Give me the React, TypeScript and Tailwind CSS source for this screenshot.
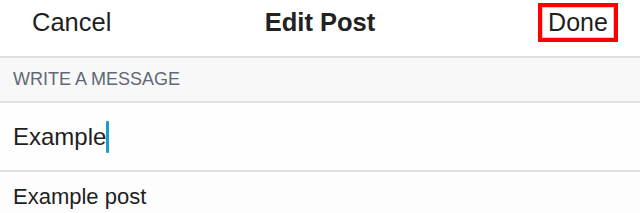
export default function App() {
  return (
    <div className="w-[640px] h-[213px] overflow-hidden bg-[#fdfdfd] text-[#1f1f1f]" style={{ fontFamily: '"Liberation Sans", Arial, sans-serif' }}>
      <div className="h-[58px] bg-white border-b-2 border-[#dedede] grid grid-cols-[1fr_auto_1fr] items-start pt-[3px]">
        <div className="pl-[32px] h-[39px] leading-[39px] text-[25.5px]">Cancel</div>
        <div className="h-[39px] leading-[39px] text-[25.5px] font-bold text-[#222]">Edit Post</div>
        <div className="flex justify-end pr-[22px]">
          <div className="border-4 border-[#ff0000] h-[39px] w-[80px]">
            <div className="h-full border border-[#f6c4c4] leading-[29px] text-center text-[25px]">Done</div>
          </div>
        </div>
      </div>
      <div className="h-[45px] bg-[#f8f8f8] border-b-2 border-[#e2e2e2] flex items-center pl-[13px] text-[18px] text-[#5f6875]">
        WRITE A MESSAGE
      </div>
      <div className="h-[69px] bg-[#fefefe] border-b-2 border-[#e2e2e2] flex items-center pl-[13px] text-[24px]">
        <span>Example</span>
        <span className="inline-block w-[3px] h-[32px] bg-[#1a9dcc] rounded-[1px]" />
      </div>
      <div className="h-[48px] flex items-center pl-[13px] text-[22px]">Example post</div>
    </div>
  );
}
